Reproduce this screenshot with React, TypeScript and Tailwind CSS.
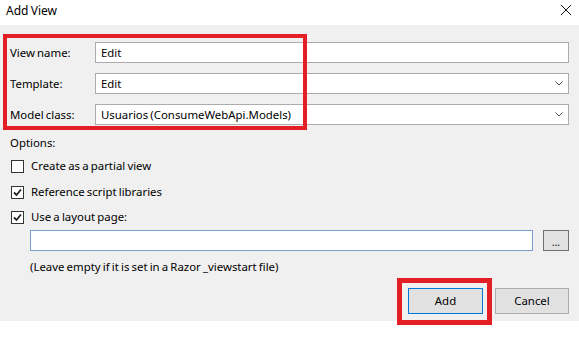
import React from 'react';

const Chevron = () => (
    <svg width="8" height="5" viewBox="0 0 8 5" className="shrink-0">
        <path d="M0.5 0.5 L4 4 L7.5 0.5" fill="none" stroke="#555" strokeWidth="1" />
    </svg>
);

const Checkbox: React.FC<{ checked?: boolean; label: string }> = ({ checked, label }) => (
    <div className="flex items-center h-4 pl-[11px]">
        <div className="w-[13px] h-[13px] border border-[#333] bg-white flex items-center justify-center">
            {checked && (
                <svg width="9" height="9" viewBox="0 0 9 9">
                    <path d="M1 4.5 L3.5 7 L8 1.5" fill="none" stroke="#222" strokeWidth="1.8" />
                </svg>
            )}
        </div>
        <span className="ml-[7px]">{label}</span>
    </div>
);

const FieldRow: React.FC<{ label: string; value: string; combo?: boolean }> = ({ label, value, combo }) => (
    <div className="flex items-center h-[21px]">
        <div className="w-[85px] shrink-0">{label}</div>
        <div className="flex-1 h-full bg-white border border-[#acacac] flex items-center px-[5px]">
            <span className="flex-1">{value}</span>
            {combo && <Chevron />}
        </div>
    </div>
);

export default function App() {
    return (
        <div
            className="relative w-[579px] h-[338px] bg-white text-[11.4px] leading-4 text-black overflow-hidden [word-spacing:-0.8px]"
            style={{ fontFamily: '"Segoe UI", "Noto Sans", sans-serif' }}
        >
            {/* title bar */}
            <div className="h-[25px] flex items-center justify-between pl-[6px] pr-[7px]">
                <span className="-mt-[4px] text-[12px]">Add View</span>
                <svg width="12" height="12" viewBox="0 0 12 12" className="-mt-[6px]">
                    <path d="M1 1 L11 11 M11 1 L1 11" stroke="#111" strokeWidth="1" />
                </svg>
            </div>

            {/* body */}
            <div className="h-[296px] bg-[#f0f0f0] pt-[17px] px-[10px] flex flex-col">
                <div className="flex flex-col gap-[10px]">
                    <FieldRow label="View name:" value="Edit" />
                    <FieldRow label="Template:" value="Edit" combo />
                    <FieldRow label="Model class:" value="Usuarios (ConsumeWebApi.Models)" combo />
                </div>

                <div className="mt-[10px] h-4">Options:</div>
                <div className="mt-[7px] -ml-[10px]">
                    <Checkbox label="Create as a partial view" />
                </div>
                <div className="mt-[10px] -ml-[10px]">
                    <Checkbox checked label="Reference script libraries" />
                </div>
                <div className="mt-[9px] -ml-[10px]">
                    <Checkbox checked label="Use a layout page:" />
                </div>

                <div className="mt-[5px] pl-[20px] flex items-center gap-[10px]">
                    <div className="flex-1 h-[21px] bg-white border border-[#7a9ec9]" />
                    <div className="w-[26px] h-[21px] bg-[#e1e1e1] border border-[#707070] flex items-end justify-center pb-[3px] leading-none text-[10px]">
                        ...
                    </div>
                </div>
                <div className="mt-[8px] pl-[20px] h-4">(Leave empty if it is set in a Razor _viewstart file)</div>

                <div className="mt-[13px] flex justify-end gap-[12px]">
                    <div className="w-[75px] h-[26px] bg-[#e1e1e1] border border-[#0078d7] flex items-center justify-center">
                        Add
                    </div>
                    <div className="w-[74px] h-[26px] bg-[#e1e1e1] border border-[#adadad] flex items-center justify-center">
                        Cancel
                    </div>
                </div>
            </div>

            {/* red annotation boxes */}
            <div className="absolute left-[3px] top-[34px] w-[304px] h-[96px] border-[4px] border-[#e31e24] pointer-events-none" />
            <div className="absolute left-[397px] top-[278px] w-[95px] h-[47px] border-[5px] border-[#e31e24] pointer-events-none" />
        </div>
    );
}
